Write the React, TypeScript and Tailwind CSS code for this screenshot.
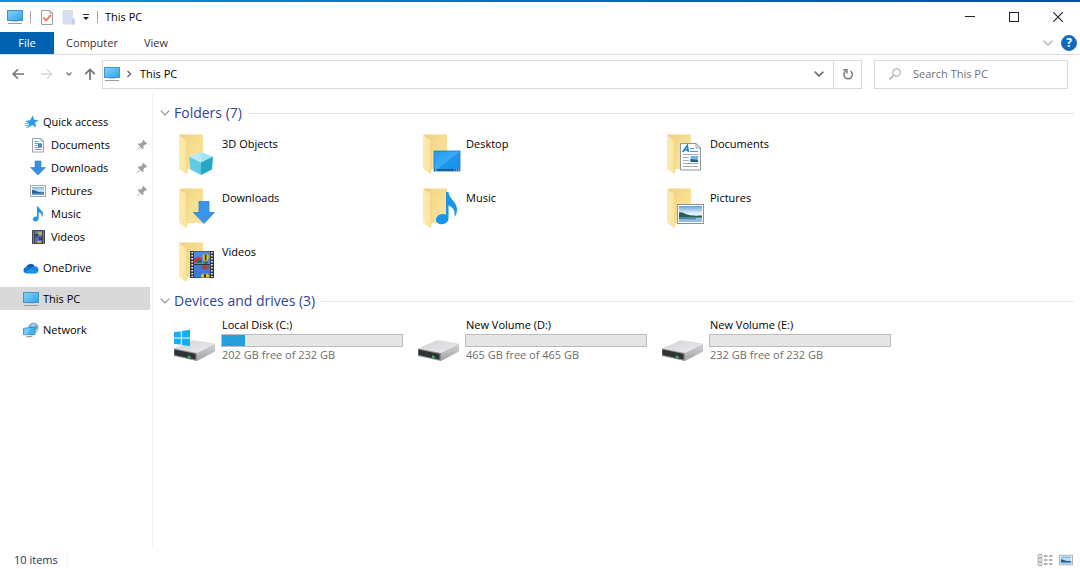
import React from "react";

type Svg = { className?: string };

function MonitorIcon({ className = "h-4 w-4" }: Svg) {
  return (
    <svg viewBox="0 0 16 16" className={`shrink-0 ${className}`} aria-hidden="true">
      <defs>
        <linearGradient id="mon" x1="0" y1="0" x2="1" y2="1">
          <stop offset="0" stopColor="#86d4fa" />
          <stop offset="1" stopColor="#2ba3ec" />
        </linearGradient>
      </defs>
      <rect x="0.5" y="1.5" width="15" height="10" fill="url(#mon)" stroke="#4a93bd" />
      <rect x="5" y="12" width="6" height="1" fill="#b9cbd6" />
      <rect x="1" y="14" width="14" height="1" fill="#8ba0ae" />
    </svg>
  );
}

function StarIcon() {
  return (
    <svg viewBox="0 0 16 16" className="h-4 w-4 shrink-0" aria-hidden="true">
      <path d="M9.800 1.600l1.400 4.100 4.400.3-3.500 2.700 1.100 5-3.900-2.600-4.700 3 1.500-4.600L2.200 7l4.700-.8z" fill="#2d9be6" />
      <path d="M2 9.500h4M1.500 11.500h4M3 13.300h2" stroke="#6bb6ea" strokeWidth="0.900" />
    </svg>
  );
}

function DocIcon() {
  return (
    <svg viewBox="0 0 16 16" className="h-4 w-4 shrink-0" aria-hidden="true">
      <path d="M2.500 1.500h8.500l2.500 2.500v11h-11z" fill="#fff" stroke="#98a3ab" />
      <path d="M11 1.500v2.500h2.500" fill="none" stroke="#98a3ab" />
      <path d="M4.500 4.500h4M4.500 6.500h7M4.500 8.500h3M4.500 10.500h7M4.500 12.500h7" stroke="#58a8e0" />
      <rect x="8" y="7" width="4" height="3" fill="#3b8fce" />
    </svg>
  );
}

function DownIcon() {
  return (
    <svg viewBox="0 0 16 16" className="h-4 w-4 shrink-0" aria-hidden="true">
      <path d="M5 1h6v6.500h4.500L8 15 .5 7.500H5z" fill="#3b8fe0" stroke="#2f7bc9" strokeWidth="0.600" />
    </svg>
  );
}

function PictureIcon({ className = "h-4 w-4" }: Svg) {
  return (
    <svg viewBox="0 0 16 16" className={`shrink-0 ${className}`} aria-hidden="true">
      <rect x="0.5" y="2.500" width="15" height="11" fill="#fff" stroke="#a3a9ad" />
      <rect x="2" y="4" width="12" height="8" fill="#b8dcf6" />
      <rect x="2" y="4" width="12" height="1.500" fill="#7fb9e8" />
      <path d="M2 7c3 0 4.500 1.500 7 2s4 0 5 .500V11H2z" fill="#2c5f86" />
      <path d="M2 10.500h12V12H2z" fill="#6ba6d8" />
    </svg>
  );
}

function NoteIcon() {
  return (
    <svg viewBox="0 0 16 16" className="h-4 w-4 shrink-0" aria-hidden="true">
      <path d="M7 .5h1.500c.3 2.800 4.500 4 4.500 7.500 0 1.500-.6 2.600-1.200 3.200.6-2.700-1-4.200-3.200-5v6.300c0 1.600-1.400 2.900-3.200 2.900-1.500 0-2.600-.8-2.600-2.100 0-1.500 1.600-2.700 3.300-2.700.3 0 .6 0 .9.100z" fill="#1e96e6" />
    </svg>
  );
}

function FilmIcon() {
  return (
    <svg viewBox="0 0 16 16" className="h-4 w-4 shrink-0" aria-hidden="true">
      <rect x="2" y="1" width="13" height="14" fill="#44454c" />
      <path d="M3.500 1.500v13M13.500 1.500v13" stroke="#b9b9b9" strokeDasharray="1 1" />
      <rect x="5" y="2" width="7" height="5.500" fill="#5a83c4" />
      <rect x="5" y="8.500" width="7" height="5.500" fill="#4a73c0" />
      <path d="M8 3h4v3H9zM7 12h4v2H7z" fill="#c9a845" />
      <path d="M5 5h3v2H5zM9 9h3v2H9z" fill="#3d3650" />
    </svg>
  );
}

function CloudIcon() {
  return (
    <svg viewBox="0 0 16 16" className="h-4 w-4 shrink-0" aria-hidden="true">
      <path d="M2.800 7.200A5 5 0 0 1 11.800 6.300L8 10z" fill="#0f5fb8" />
      <path d="M3 13.200a3.200 3.200 0 0 1 .2-6.300c1.200 0 2 .3 3 .900L12 13.200z" fill="#1272cf" />
      <path d="M3 13.200c2-3 5.500-6.900 8.500-6.900A3.500 3.500 0 0 1 15.500 10c0 1.900-1.200 3.200-3 3.200z" fill="#1b85dd" />
      <path d="M1.300 12.300L7.800 9l6.800 3.300c-.6.600-1.300.9-2.200.9H3.500c-.9 0-1.600-.3-2.200-.9z" fill="#1f93e8" />
    </svg>
  );
}

function NetworkIcon() {
  return (
    <svg viewBox="0 0 16 16" className="h-4 w-4 shrink-0" aria-hidden="true">
      <circle cx="10.500" cy="5.800" r="5" fill="#6aa9cc" />
      <path d="M8 3c1-2 4-1.500 5 0l-2 2-3-.5zM12 8l3.300-2c0 3-1.300 4.500-3.300 5z" fill="#b3cdd2" />
      <path d="M.5 6.300L12 5v7.500L.5 12.800z" fill="#43b2ee" stroke="#3585b5" strokeWidth="0.800" />
      <path d="M1 6.700l7-.8-4 6.500-3 .1z" fill="#74cbf6" />
      <path d="M3.500 15l6-1" stroke="#6b8fa6" strokeWidth="1.200" />
    </svg>
  );
}

function PinIcon() {
  return (
    <svg viewBox="0 0 12 12" className="h-3 w-3 shrink-0" role="img" aria-label="Pinned">
      <path d="M7.200.8l4 4-1.200.7-1 .1-1.600 1.700.1 2.200-.9.800-2.300-2.300L1.500 10.900l-.8.400.4-.8 2.800-3L1.700 5.200l.9-.9 2.200.1L6.500 2.800v-1z" fill="#98a2a8" />
    </svg>
  );
}

function Chevron({ className, weight = 1.5 }: Svg & { weight?: number }) {
  return (
    <svg viewBox="0 0 10 6" className={`shrink-0 ${className ?? ""}`} aria-hidden="true">
      <path d="M.7.700L5 5 9.300.700" fill="none" stroke="currentColor" strokeWidth={weight} />
    </svg>
  );
}

function FolderTile({ children }: { children: React.ReactNode }) {
  return (
    <svg viewBox="0 0 48 48" className="h-12 w-12 shrink-0" aria-hidden="true">
      <defs>
        <linearGradient id="back" x1="0" y1="0" x2="1" y2="1">
          <stop offset="0" stopColor="#efd083" />
          <stop offset="0.500" stopColor="#f8dd90" />
          <stop offset="1" stopColor="#fbe6a2" />
        </linearGradient>
        <linearGradient id="flap" x1="0" y1="0" x2="1" y2="0">
          <stop offset="0" stopColor="#fdebb0" />
          <stop offset="1" stopColor="#fae29b" />
        </linearGradient>
        <linearGradient id="screen" x1="0" y1="0" x2="1" y2="1">
          <stop offset="0" stopColor="#1b9bef" />
          <stop offset="0.500" stopColor="#3dabf5" />
          <stop offset="0.520" stopColor="#1f97ec" />
          <stop offset="1" stopColor="#1c8fe6" />
        </linearGradient>
        <linearGradient id="sky" x1="0" y1="0" x2="0" y2="1">
          <stop offset="0" stopColor="#5da3e0" />
          <stop offset="0.450" stopColor="#e4f2fb" />
          <stop offset="1" stopColor="#e4f2fb" />
        </linearGradient>
      </defs>
      <path d="M9 5.500L10.500 4.500H33V39H15z" fill="url(#back)" />
      <path d="M9 5.200L17 10.500V42.500L15.800 44 9 38.500z" fill="url(#flap)" />
      <path d="M17 10.500v32" stroke="#ebcb7a" strokeWidth="0.600" />
      {children}
    </svg>
  );
}

const cube = (
  <g>
    <path d="M31 22l12 4.500-12 6-12-6z" fill="#a2e4f1" />
    <path d="M19 26.500L31 32.500V45l-10.500-5.500z" fill="#5fcbe2" />
    <path d="M43 26.500L31 32.500V45l11-5.500z" fill="#25a8c8" />
    <path d="M19 26.500L31 22v10.500z" fill="#c2eef6" opacity="0.700" />
  </g>
);
const desktop = (
  <g>
    <rect x="20" y="21" width="26" height="20" fill="url(#screen)" stroke="#1c78bd" strokeWidth="0.800" />
    <rect x="20" y="39" width="26" height="2" fill="#155f97" />
    <path d="M21 40h1.500M40 40h1M42 40h1M44 40h1.500" stroke="#dff1ff" strokeWidth="0.900" />
  </g>
);
const documents = (
  <g>
    <path d="M22.500 13.500H38l4.500 4.500v22h-20z" fill="#fff" stroke="#8d969c" />
    <path d="M38 13.500V18h4.500z" fill="#e6eaed" stroke="#8d969c" strokeWidth="0.800" />
    <path d="M24.800 22l4.500-6.500 1 6.500M26.500 20h3.500" stroke="#1e86cf" strokeWidth="1.700" fill="none" />
    <path d="M32 18.500h4M32 21.500h8" stroke="#4b9bd2" />
    <path d="M25 24.500h15M25 27.500h6M25 30.500h6M25 33.500h15M25 36.500h15" stroke="#a0a9af" />
    <rect x="32.500" y="26" width="7.500" height="6" fill="#6db4e6" />
    <path d="M32.500 29l4 .5 3.500.5v2h-7.500z" fill="#1f5f82" />
  </g>
);
const downloads = (
  <path d="M29 17.500h10v11h5.500L34 39.500 23.500 28.500H29z" fill="#3995ec" stroke="#2b80d3" strokeWidth="0.800" />
);
const music = (
  <path d="M32 8h2.500c.5 7 8.500 9.500 8.500 17.500 0 3-1 5.500-2.500 7.500 1-6-1.500-10-6-11.500V34.500c0 3.300-3 5.700-6.700 5.700-3.400 0-5.800-1.700-5.800-4.500 0-3.400 3.300-5.700 6.800-5.700 1.200 0 2.300.2 3.200.6z" fill="#1897e8" />
);
const pictures = (
  <g>
    <rect x="19.500" y="20.500" width="26" height="19" fill="#fff" stroke="#8d9499" />
    <rect x="21" y="22" width="23" height="16" fill="url(#sky)" />
    <path d="M21 28.500c3-1 5 1 8 2s6 1 9 1.200 5-.5 6 0V34H21z" fill="#2b5a5c" />
    <path d="M21 33.500h23V38H21z" fill="#8fbfe2" />
    <path d="M21 34.500c6-.5 12 1 17 0" stroke="#3c7797" strokeWidth="1" fill="none" />
  </g>
);
const videos = (
  <g>
    <rect x="20" y="13" width="24" height="27" fill="#33363d" />
    <path d="M22.200 14v25M41.800 14v25" stroke="#e6e6e6" strokeWidth="1.800" strokeDasharray="1.500 1.500" />
    <rect x="24" y="13.500" width="16" height="12.500" fill="#4c8ce0" />
    <rect x="24" y="27" width="16" height="12.500" fill="#3c7ad4" />
    <path d="M32.500 18c1.500-3 6.500-2.500 6.500.5l-1.500 4.500h-4z" fill="#e6bf2f" />
    <path d="M34.800 16.500v6h1.700v-6z" fill="#33430f" />
    <path d="M24 20.500l4-2 4 1.500-1 4-7 1z" fill="#b43a58" />
    <path d="M27 22h5v3h-5zM34 23.500h4v2h-4z" fill="#2f6f3c" />
    <path d="M31 29l3-2 5 1-1 3.500-5-.5z" fill="#a9443c" />
    <path d="M31 38c0-3 7.500-3.500 8 0v1.500h-8z" fill="#e6bf2f" />
    <path d="M34 36h2v3.500h-2z" fill="#33430f" />
  </g>
);

function DriveIcon({ system }: { system?: boolean }) {
  return (
    <svg viewBox="0 0 48 48" className="h-12 w-12 shrink-0" aria-hidden="true">
      <defs>
        <linearGradient id="top" x1="0" y1="0" x2="1" y2="1">
          <stop offset="0" stopColor="#d2d2d4" />
          <stop offset="1" stopColor="#ececee" />
        </linearGradient>
        <linearGradient id="side" x1="0" y1="0" x2="0" y2="1">
          <stop offset="0" stopColor="#d4d4d7" />
          <stop offset="1" stopColor="#a2a2a6" />
        </linearGradient>
      </defs>
      <path d="M4 31.500L22 23.500q1-.5 2-.3L45 26.500 27 36z" fill="url(#top)" />
      <path d="M27 36l18-9.500v8l-18 9.500z" fill="url(#side)" />
      <path d="M4 31.500L27 36v8L4 39z" fill="#8a8b8e" />
      <path d="M4.500 32.500L25.500 37v5.500L4.500 38z" fill="#2f3234" />
      <path d="M18 38.500l2.500.5v2l-2.500-.5z" fill="#39c45c" />
      {system && (
        <path
          d="M4 15.200l6.800-1v6.300H4zM11.800 14l8.200-1.200v7.700h-8.200zM4 21.500h6.800v6.300L4 26.800zM11.800 21.500H20v7.700L11.800 28z"
          fill="#16aef0"
        />
      )}
    </svg>
  );
}

const quick = [
  { name: "Documents", icon: <DocIcon />, pinned: true },
  { name: "Downloads", icon: <DownIcon />, pinned: true },
  { name: "Pictures", icon: <PictureIcon />, pinned: true },
  { name: "Music", icon: <NoteIcon />, pinned: false },
  { name: "Videos", icon: <FilmIcon />, pinned: false },
];

const folders = [
  { name: "3D Objects", art: cube },
  { name: "Desktop", art: desktop },
  { name: "Documents", art: documents },
  { name: "Downloads", art: downloads },
  { name: "Music", art: music },
  { name: "Pictures", art: pictures },
  { name: "Videos", art: videos },
];

const drives = [
  { name: "Local Disk (C:)", free: 202, size: 232, system: true },
  { name: "New Volume (D:)", free: 465, size: 465, system: false },
  { name: "New Volume (E:)", free: 232, size: 232, system: false },
];

function SideItem({ name, icon, active }: { name: string; icon: React.ReactNode; active?: boolean }) {
  return (
    <a
      href="#"
      aria-current={active ? "page" : undefined}
      className={`flex h-[23px] items-center gap-1 pl-[23px] ${active ? "bg-[#d9d9d9]" : ""}`}
    >
      {icon}
      {name}
    </a>
  );
}

function SectionTitle({ children }: { children: React.ReactNode }) {
  return (
    <div className="flex h-6 items-center">
      <button type="button" className="flex items-center gap-1 whitespace-nowrap text-sm text-[#2f4590]">
        <Chevron className="h-1.5 w-2.5 text-[#8f8f8f]" weight={1.1} />
        <h2>{children}</h2>
      </button>
      <div className="ml-1.5 h-px flex-1 bg-[#e6e6e6]" />
    </div>
  );
}

export default function App() {
  return (
    <div className="flex min-h-screen flex-col bg-white font-['Open_Sans','Noto_Sans',sans-serif] text-[11px] leading-4 text-black">
      <div className="h-0.5 bg-linear-to-r from-[#1092da] to-[#0046ae]" />

      <header>
        <div className="flex h-[30px] items-center">
          <div className="flex items-center pl-[7px]">
            <MonitorIcon />
            <div className="ml-[7px] h-3 w-px bg-[#a6a6a6]" />
            <button type="button" aria-label="Properties" className="ml-[9px]">
              <svg viewBox="0 0 14 16" className="h-4 w-3.5">
                <path d="M1.500 1.500H10l2.500 2.500v11.500h-11z" fill="#f8fafc" stroke="#9a9da6" />
                <path d="M10 1.500V4h2.500" fill="none" stroke="#9a9da6" />
                <path d="M3.500 8.500l2.500 3 5-5.500" fill="none" stroke="#e8704a" strokeWidth="1.800" />
              </svg>
            </button>
            <button type="button" aria-label="New folder" className="ml-2">
              <svg viewBox="0 0 14 16" className="h-4 w-3.5">
                <path d="M.5 1H11v9h2v5.500H.5z" fill="#d5dff0" />
                <path d="M11 9.500h1.500v6H10V10z" fill="#c3d0e6" />
              </svg>
            </button>
            <button type="button" aria-label="Customize Quick Access Toolbar" className="ml-1.5">
              <svg viewBox="0 0 8 8" className="h-2 w-2">
                <path d="M1 1.500h6" stroke="#333" />
                <path d="M1 4h6L4 7z" fill="#222" />
              </svg>
            </button>
            <div className="ml-[7px] h-3 w-px bg-[#a6a6a6]" />
            <h1 className="ml-[7px]">This PC</h1>
          </div>
          <div className="ml-auto flex self-stretch text-[#222]">
            <button type="button" aria-label="Minimize" className="flex w-11 items-center justify-center">
              <svg viewBox="0 0 10 10" className="h-2.5 w-2.5">
                <path d="M0 4.500h10" stroke="currentColor" />
              </svg>
            </button>
            <button type="button" aria-label="Maximize" className="flex w-11 items-center justify-center">
              <svg viewBox="0 0 10 10" className="h-2.5 w-2.5">
                <rect x="0.5" y="0.5" width="9" height="9" fill="none" stroke="currentColor" />
              </svg>
            </button>
            <button type="button" aria-label="Close" className="flex w-11 items-center justify-center">
              <svg viewBox="0 0 10 10" className="h-2.5 w-2.5">
                <path d="M.3.3l9.400 9.400M9.700.3L.3 9.700" stroke="currentColor" strokeWidth="1.100" />
              </svg>
            </button>
          </div>
        </div>

        <div className="flex h-[23px] items-stretch border-b border-[#dcdcdc] text-[#333]">
          <button type="button" className="w-[54px] bg-[#0063b1] text-white">File</button>
          <button type="button" className="w-[76px]">Computer</button>
          <button type="button" className="w-[52px]">View</button>
          <div className="ml-auto flex items-center gap-2 pr-[3px]">
            <button type="button" aria-label="Expand the Ribbon">
              <Chevron className="h-1.5 w-2.5 text-[#b5b5b5]" />
            </button>
            <button
              type="button"
              aria-label="Help"
              className="flex h-4 w-4 items-center justify-center rounded-full border border-[#2a6aa8] bg-[#0d6ac4] text-xs font-bold leading-none text-white"
            >
              ?
            </button>
          </div>
        </div>

        <div className="flex h-[38px] items-center px-3 text-[#777]">
          <button type="button" aria-label="Back">
            <svg viewBox="0 0 12 12" className="h-3 w-3">
              <path d="M12 6H1.500M6 1.200L1.200 6 6 10.800" fill="none" stroke="#747474" strokeWidth="1.600" />
            </svg>
          </button>
          <button type="button" aria-label="Forward" className="ml-[17px]">
            <svg viewBox="0 0 12 12" className="h-3 w-3">
              <path d="M0 6h10.500M6 1.200L10.800 6 6 10.800" fill="none" stroke="#d6d6d6" strokeWidth="1.300" />
            </svg>
          </button>
          <button type="button" aria-label="Recent locations" className="ml-[13px]">
            <svg viewBox="0 0 6 6" className="h-1.5 w-1.5">
              <path d="M.5 1.500L3 4l2.500-2.500" fill="none" stroke="#7a7a7a" strokeWidth="1.400" />
            </svg>
          </button>
          <button type="button" aria-label="Up" className="ml-3">
            <svg viewBox="0 0 12 12" className="h-3 w-3">
              <path d="M6 12V1.500M1.200 6.200L6 1.400l4.800 4.800" fill="none" stroke="#747474" strokeWidth="1.700" />
            </svg>
          </button>

          <div className="ml-1.5 flex h-[29px] flex-1 items-stretch border border-[#d9d9d9]">
            <nav aria-label="Address" className="flex flex-1 items-center pl-px text-black">
              <MonitorIcon />
              <svg viewBox="0 0 6 8" className="ml-[6px] h-2 w-1.5" aria-hidden="true">
                <path d="M1.500 1l3 3-3 3" fill="none" stroke="#666" strokeWidth="1.400" />
              </svg>
              <a href="#" className="ml-2">This PC</a>
            </nav>
            <button type="button" aria-label="Previous locations" className="flex w-7 items-center justify-center">
              <Chevron className="h-1.5 w-2.5 text-[#777]" weight={1.8} />
            </button>
            <button
              type="button"
              aria-label="Refresh"
              className="flex w-7 items-center justify-center border-l border-[#d9d9d9]"
            >
              <svg viewBox="0 0 12 12" className="h-3 w-3">
                <path d="M3.600 3.200a4.200 4.200 0 1 0 5 0" fill="none" stroke="#777" strokeWidth="1.500" />
                <path d="M1.200 1.700h3.800v3.800" fill="none" stroke="#777" strokeWidth="1.400" />
              </svg>
            </button>
          </div>

          <label className="ml-3 flex h-[29px] w-[194px] items-center gap-3 border border-[#d9d9d9] pl-3.5">
            <svg viewBox="0 0 12 12" className="h-3 w-3 shrink-0" aria-hidden="true">
              <circle cx="7.500" cy="4.500" r="3.800" fill="none" stroke="#9c9c9c" />
              <path d="M4.800 7.200L.5 11.500" stroke="#9c9c9c" strokeWidth="1.200" />
            </svg>
            <input
              type="search"
              aria-label="Search This PC"
              placeholder="Search This PC"
              className="w-full min-w-0 bg-transparent outline-none placeholder:text-[#6f6f6f]"
            />
          </label>
        </div>
      </header>

      <div className="flex flex-1 items-stretch">
        <nav
          aria-label="Folders"
          className="flex w-[153px] shrink-0 flex-col gap-2 border-r border-[#f3f3f3] pr-0.5 pt-[17px]"
        >
          <div>
            <SideItem name="Quick access" icon={<StarIcon />} />
            <ul>
              {quick.map((q) => (
                <li key={q.name}>
                  <a href="#" className="flex h-[23px] items-center gap-[5px] pl-[30px] pr-0.5">
                    {q.icon}
                    <span className="flex-1">{q.name}</span>
                    {q.pinned && <PinIcon />}
                  </a>
                </li>
              ))}
            </ul>
          </div>
          <SideItem name="OneDrive" icon={<CloudIcon />} />
          <SideItem name="This PC" icon={<MonitorIcon />} active />
          <SideItem name="Network" icon={<NetworkIcon />} />
        </nav>

        <main className="min-w-0 flex-1 pl-[7px] pr-1.5 pt-2">
          <section>
            <SectionTitle>Folders (7)</SectionTitle>
            <ul className="mt-[5px] grid grid-cols-[repeat(auto-fill,244px)] gap-y-1.5 pl-2.5">
              {folders.map((f) => (
                <li key={f.name}>
                  <a href="#" className="flex gap-1">
                    <FolderTile>{f.art}</FolderTile>
                    <span className="pt-1.5">{f.name}</span>
                  </a>
                </li>
              ))}
            </ul>
          </section>
          <section className="mt-[3px]">
            <SectionTitle>Devices and drives (3)</SectionTitle>
            <ul className="mt-1 grid grid-cols-[repeat(auto-fill,244px)] gap-y-1.5 pl-2.5">
              {drives.map((d) => (
                <li key={d.name}>
                  <a href="#" className="flex gap-[3px]">
                    <DriveIcon system={d.system} />
                    <div className="w-[182px]">
                      <div className="pl-px">{d.name}</div>
                      <div className="mt-px h-[13px] border border-[#bcbcbc] bg-[#e6e6e6]">
                        <div className="h-full bg-[#26a0da]" style={{ width: `${(1 - d.free / d.size) * 100}%` }} />
                      </div>
                      <div className="pl-px text-[#6d6d6d]">
                        {d.free} GB free of {d.size} GB
                      </div>
                    </div>
                  </a>
                </li>
              ))}
            </ul>
          </section>
        </main>
      </div>

      <footer className="flex h-5 items-center pl-3.5 pr-[7px] pt-0.5 text-[#1e3060]">
        <span>10 items</span>
        <div className="ml-2 h-3 w-px bg-[#f3f3f3]" />
        <div className="ml-auto flex items-center gap-1.5">
          <button type="button" aria-label="Details view">
            <svg viewBox="0 0 16 14" className="h-3.5 w-4">
              <path d="M1 1.500h4v3H1zM1 5.500h4v3H1zM1 9.500h4v3H1z" fill="#e8e8e8" stroke="#a6a6a6" strokeWidth="0.800" />
              <path d="M7 3h3.500M12 3h3.500M7 7h3.500M12 7h3.500M7 11h3.500M12 11h3.500" stroke="#666" />
            </svg>
          </button>
          <button type="button" aria-label="Large icons view">
            <PictureIcon className="h-3.5 w-3.5" />
          </button>
        </div>
      </footer>
    </div>
  );
}
